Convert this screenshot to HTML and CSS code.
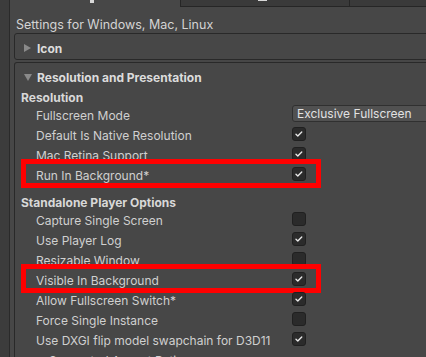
FILE: index.html
```html
<!DOCTYPE html>
<html>
<head>
<meta charset="utf-8">
<link rel="stylesheet" href="styles.css">
</head>
<body>
<div class="app">
  <div class="gutter"></div>
  <div class="main">
    <div class="tabs">
      <div class="tab tab-active"><span class="tab-icon icon-a"></span></div>
      <div class="tab tab-b"><span class="tab-icon icon-b"></span></div>
      <div class="tab tab-c"></div>
    </div>
    <div class="platform-title">Settings for Windows, Mac, Linux</div>
    <div class="foldout collapsed">
      <div class="foldout-header"><span class="arrow arrow-right"></span>Icon</div>
    </div>
    <div class="foldout expanded">
      <div class="foldout-header"><span class="arrow arrow-down"></span>Resolution and Presentation</div>
      <div class="section">Resolution</div>
      <div class="row"><span class="label">Fullscreen Mode</span><div class="dropdown">Exclusive Fullscreen</div></div>
      <div class="row"><span class="label">Default Is Native Resolution</span><span class="check on"><svg viewBox="0 0 14 14"><path d="M3.5 7.3 L5.6 9.3 L10.2 4.6"/></svg></span></div>
      <div class="row"><span class="label">Mac Retina Support</span><span class="check on"><svg viewBox="0 0 14 14"><path d="M3.5 7.3 L5.6 9.3 L10.2 4.6"/></svg></span></div>
      <div class="row marked"><span class="label">Run In Background*</span><span class="check on"><svg viewBox="0 0 14 14"><path d="M3.5 7.3 L5.6 9.3 L10.2 4.6"/></svg></span></div>
      <div class="section section-gap">Standalone Player Options</div>
      <div class="row"><span class="label">Capture Single Screen</span><span class="check"></span></div>
      <div class="row"><span class="label">Use Player Log</span><span class="check on"><svg viewBox="0 0 14 14"><path d="M3.5 7.3 L5.6 9.3 L10.2 4.6"/></svg></span></div>
      <div class="row"><span class="label">Resizable Window</span><span class="check"></span></div>
      <div class="row marked"><span class="label">Visible In Background</span><span class="check on"><svg viewBox="0 0 14 14"><path d="M3.5 7.3 L5.6 9.3 L10.2 4.6"/></svg></span></div>
      <div class="row"><span class="label">Allow Fullscreen Switch*</span><span class="check on"><svg viewBox="0 0 14 14"><path d="M3.5 7.3 L5.6 9.3 L10.2 4.6"/></svg></span></div>
      <div class="row"><span class="label">Force Single Instance</span><span class="check"></span></div>
      <div class="row"><span class="label">Use DXGI flip model swapchain for D3D11</span><span class="check on"><svg viewBox="0 0 14 14"><path d="M3.5 7.3 L5.6 9.3 L10.2 4.6"/></svg></span></div>
      <div class="row sub-foldout"><span class="label"><span class="arrow arrow-right small"></span>Supported Aspect Ratios</span></div>
    </div>
  </div>
</div>
</body>
</html>
```

FILE: styles.css
```css
*, *::before, *::after { box-sizing: border-box; }
html, body {
  margin: 0;
  padding: 0;
  width: 426px;
  height: 357px;
  overflow: hidden;
  background: #474747;
}
body {
  font-family: Inter, "Noto Sans", sans-serif;
  font-size: 12px;
  color: #d2d2d2;
}
.app {
  display: flex;
  height: 357px;
}
.gutter {
  width: 10px;
  flex: none;
  background: #3c3c3c;
  border-right: 1px solid #2a2a2a;
}
.main {
  flex: 1;
  display: flex;
  flex-direction: column;
  min-width: 0;
}
.tabs {
  display: flex;
  height: 7px;
  flex: none;
}
.tab {
  position: relative;
  height: 7px;
}
.tab-active {
  width: 170px;
  background: #474747;
}
.tab-b {
  width: 169px;
  background: #3a3a3a;
  border-left: 1px solid #262626;
  border-bottom: 1px solid #262626;
}
.tab-c {
  flex: 1;
  background: #3a3a3a;
  border-left: 1px solid #262626;
  border-bottom: 1px solid #262626;
}
.tab-icon {
  position: absolute;
  top: 0;
  background: #d8d8d8;
}
.icon-a {
  left: 80px;
  width: 4px;
  height: 3px;
}
.icon-b {
  left: 77px;
  width: 9px;
  height: 1px;
}
.platform-title {
  height: 26px;
  padding-left: 6px;
  padding-top: 10px;
  line-height: 16px;
  font-size: 12.5px;
  color: #d4d4d4;
  white-space: nowrap;
}
.foldout {
  margin-left: 4px;
  margin-right: -10px;
  border: 1px solid #292929;
  border-radius: 3px;
}
.collapsed {
  height: 27px;
}
.expanded {
  margin-top: 2px;
  flex: 1;
  border-bottom: none;
}
.foldout-header {
  display: flex;
  align-items: center;
  font-weight: 700;
  color: #dcdcdc;
  padding-left: 9px;
}
.collapsed .foldout-header {
  height: 25px;
  padding-top: 3px;
}
.expanded .foldout-header {
  height: 22px;
  padding-top: 6px;
}
.arrow {
  display: inline-block;
  width: 0;
  height: 0;
  margin-right: 6px;
}
.arrow-right {
  border-top: 4px solid transparent;
  border-bottom: 4px solid transparent;
  border-left: 7px solid #8a8a8a;
}
.arrow-down {
  border-left: 4px solid transparent;
  border-right: 4px solid transparent;
  border-top: 7px solid #8a8a8a;
  margin-right: 5px;
}
.arrow-right.small {
  border-top-width: 4px;
  border-bottom-width: 4px;
  border-left-width: 6px;
  margin-right: 6px;
}
.section {
  height: 19px;
  padding-top: 6px;
  line-height: 13px;
  padding-left: 6px;
  font-weight: 700;
  color: #d8d8d8;
}
.section-gap {
  height: 25px;
  padding-top: 12px;
  line-height: 13px;
}
.row {
  position: relative;
  display: grid;
  grid-template-columns: 277px 1fr;
  align-items: center;
  height: 20px;
}
.label {
  padding-left: 21px;
  padding-top: 4px;
  line-height: 16px;
  white-space: nowrap;
  color: #d0d0d0;
}
.sub-foldout {
  align-items: start;
}
.sub-foldout .label {
  display: flex;
  align-items: center;
  padding-left: 22px;
  padding-top: 4px;
}
.dropdown {
  height: 17px;
  margin-top: -1px;
  line-height: 15px;
  padding-left: 4px;
  background: #515151;
  border: 1px solid #303030;
  border-radius: 3px;
  color: #e2e2e2;
  white-space: nowrap;
}
.check {
  width: 14px;
  height: 14px;
  margin-top: -1px;
  background: #2b2b2b;
  border: 1px solid #202020;
  border-radius: 3px;
  display: flex;
  align-items: center;
  justify-content: center;
}
.check svg {
  width: 12px;
  height: 12px;
  fill: none;
  stroke: #e8e8e8;
  stroke-width: 1.6;
  stroke-linecap: round;
  stroke-linejoin: round;
}
.marked::after {
  content: "";
  position: absolute;
  left: 6px;
  top: -5px;
  width: 300px;
  height: 29px;
  border: 5px solid #ff0000;
  pointer-events: none;
}
```
